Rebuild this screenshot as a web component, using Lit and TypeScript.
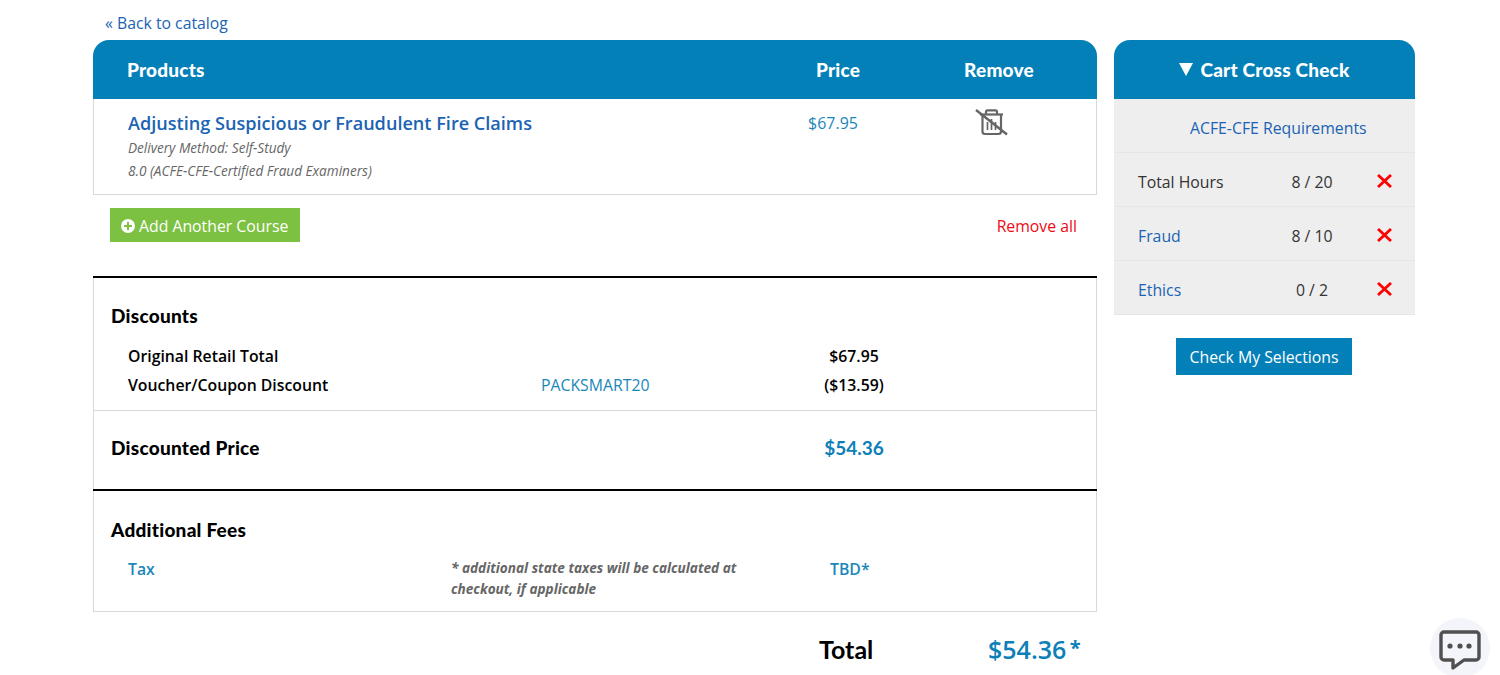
import { LitElement, html, css } from "lit";
import { customElement } from "lit/decorators.js";

const trashIcon = html`<svg class="trash" width="33" height="27" viewBox="0 0 33 27" fill="none" stroke="#666" stroke-width="2.200">
  <path d="M5 5.500H28" />
  <path d="M11 5.500V2.800C11 1.900 11.600 1.300 12.500 1.300H20.500C21.400 1.300 22 1.900 22 2.800V5.500" />
  <path d="M7.500 5.500V22.500C7.500 24 8.500 25 10 25H23.500C25 25 26 24 26 22.500V5.500" />
  <path d="M12.500 13V21M16.500 10V21M20.500 13V21" stroke-width="1.700" />
  <path d="M1 1L32 25.500" stroke-width="2.400" />
</svg>`;

const crossIcon = html`<svg class="cross" width="15" height="14" viewBox="0 0 15 14" fill="none" stroke="#f00" stroke-width="2.800">
  <path d="M1 1L14 13M14 1L1 13" />
</svg>`;

const chatIcon = html`<svg class="chat-icon" width="42" height="41" viewBox="0 0 42 41" fill="none">
  <path d="M5 2H37C38.700 2 40 3.300 40 5V27C40 28.700 38.700 30 37 30H25L14 38V30H5C3.300 30 2 28.700 2 27V5C2 3.300 3.300 2 5 2Z" stroke="#505050" stroke-width="3.400" stroke-linejoin="round" />
  <circle cx="11" cy="16" r="2.600" fill="#505050" />
  <circle cx="21" cy="16" r="2.600" fill="#505050" />
  <circle cx="30" cy="16" r="2.600" fill="#505050" />
</svg>`;

const requirements = [
  { label: "Total Hours", value: "8 / 20", link: false },
  { label: "Fraud", value: "8 / 10", link: true },
  { label: "Ethics", value: "0 / 2", link: true },
];

@customElement("app-root")
export class AppRoot extends LitElement {
  static styles = css`
    :host {
      display: block;
      height: 675px;
      overflow: hidden;
      background: #fff;
      font-family: "Open Sans", sans-serif;
      font-size: 15.800px;
      color: #333;
    }

    a {
      color: #1b63b3;
      text-decoration: none;
    }

    .page {
      display: grid;
      grid-template-columns: 1004px 301px;
      column-gap: 17px;
      padding: 40px 0 0 93px;
      align-items: start;
    }

    .back {
      position: absolute;
      top: 13px;
      left: 105px;
      line-height: 20px;
    }

    .head {
      height: 59px;
      background: #0480b9;
      border-radius: 16px 16px 0 0;
      color: #fff;
      font-family: Lato, sans-serif;
      font-weight: 900;
      font-size: 19px;
      letter-spacing: 0.200px;
    }

    .cart-head {
      display: grid;
      grid-template-columns: 651px 120px 1fr;
      align-items: center;
      padding-left: 34px;
    }

    .cart-head span:nth-child(2),
    .cart-head span:nth-child(3) {
      text-align: center;
    }

    .cart-head span:nth-child(3) {
      padding-left: 3px;
    }

    .product {
      display: grid;
      grid-template-columns: 680px 167px 1fr;
      height: 96px;
      box-sizing: border-box;
      padding: 12px 0 0 34px;
      border: 1px solid #d9d9d9;
      border-top: none;
    }

    .title {
      display: block;
      font-size: 18.100px;
      font-weight: 600;
      line-height: 25px;
    }

    .meta {
      font-size: 13.600px;
      font-style: italic;
      color: #666;
      line-height: 23px;
    }

    .price {
      color: #1a87b9;
      font-size: 16px;
      line-height: 24px;
    }

    .trash {
      display: block;
      margin-top: -2px;
    }

    .actions {
      display: flex;
      justify-content: space-between;
      align-items: center;
      margin-top: 13px;
      padding: 0 20px 0 17px;
    }

    .add {
      display: flex;
      align-items: center;
      gap: 4px;
      box-sizing: border-box;
      width: 190px;
      height: 34px;
      padding: 1px 0 0 11px;
      background: #7dc142;
      color: #fff;
    }

    .plus {
      position: relative;
      width: 14px;
      height: 14px;
      border-radius: 50%;
      background: #fff;
    }

    .plus::before,
    .plus::after {
      content: "";
      position: absolute;
      background: #7dc142;
    }

    .plus::before {
      left: 3px;
      right: 3px;
      top: 6px;
      height: 2px;
    }

    .plus::after {
      top: 3px;
      bottom: 3px;
      left: 6px;
      width: 2px;
    }

    .remove-all {
      color: #f00a14;
      padding-top: 1px;
    }

    .summary {
      margin-top: 34px;
      border: 1px solid #d9d9d9;
      border-top: none;
      border-bottom: none;
    }

    .block {
      border-top: 2px solid #000;
      margin: 0 -1px;
      padding: 0 1px;
    }

    .heading {
      font-family: Lato, sans-serif;
      font-weight: 900;
      font-size: 19px;
      letter-spacing: 0.250px;
      color: #000;
      padding-left: 17px;
    }

    .discounts {
      height: 135px;
      box-sizing: border-box;
      padding-top: 26px;
      border-bottom: 1px solid #d9d9d9;
    }

    .discounts .heading {
      line-height: 24px;
      margin-bottom: 14px;
    }

    .line {
      display: grid;
      grid-template-columns: 413px 248px 130px;
      padding-left: 34px;
      font-weight: 600;
      color: #000;
      line-height: 29px;
    }

    .code {
      color: #1a87b9;
      font-weight: 400;
    }

    .amount {
      text-align: center;
    }

    .discounted {
      display: grid;
      grid-template-columns: 695px 130px;
      align-items: center;
      height: 78px;
      box-sizing: border-box;
      padding-bottom: 6px;
    }

    .discounted .amount {
      color: #0d80b8;
      font-family: Lato, sans-serif;
      font-weight: 700;
      font-size: 19px;
    }

    .fees {
      height: 123px;
      box-sizing: border-box;
      padding-top: 27px;
      border-bottom: 1px solid #d9d9d9;
    }

    .fees .heading {
      line-height: 24px;
      margin-bottom: 17px;
    }

    .tax {
      display: grid;
      grid-template-columns: 323px 379px 100px;
      padding-left: 34px;
      color: #1a87b9;
      font-weight: 600;
      line-height: 20px;
    }

    .note {
      font-size: 13.600px;
      font-style: italic;
      font-weight: 700;
      color: #666;
      line-height: 21px;
      margin-top: -2px;
    }

    .total {
      display: flex;
      align-items: center;
      height: 40px;
      margin-top: 17px;
      padding-left: 726px;
    }

    .total-label {
      width: 169px;
      font-family: Lato, sans-serif;
      font-weight: 700;
      font-size: 25px;
      color: #000;
    }

    .total-value {
      font-weight: 600;
      font-size: 25px;
      line-height: 34px;
      color: #0d80b8;
      white-space: nowrap;
    }

    .total-value span {
      margin-left: -3px;
      font-size: 20px;
      font-weight: 700;
      vertical-align: 4px;
      line-height: 1;
    }

    .side-head {
      display: flex;
      justify-content: center;
      align-items: center;
      gap: 7px;
    }

    .req-title {
      height: 53px;
      line-height: 58px;
      padding-left: 76px;
      background: #eee;
    }

    .req-rows {
      border-bottom: 1px solid #e6e6e6;
    }

    .req-row {
      display: grid;
      grid-template-columns: 134px 80px 1fr;
      align-items: center;
      height: 54px;
      box-sizing: border-box;
      padding: 5px 0 0 24px;
      background: #eee;
      border-top: 1px solid #e6e6e6;
      color: #333;
    }

    .req-row span:nth-child(2) {
      text-align: center;
    }

    .cross {
      display: block;
      margin: -3px 0 0 25px;
    }

    .check-wrap {
      display: flex;
      justify-content: center;
      margin-top: 23px;
      padding-right: 1px;
    }

    .check {
      width: 176px;
      height: 37px;
      line-height: 38px;
      text-align: center;
      background: #0480b9;
      color: #fff;
    }

    .chat {
      position: fixed;
      left: 1430px;
      top: 618px;
      width: 60px;
      height: 60px;
      display: flex;
      align-items: center;
      justify-content: center;
      border-radius: 50%;
      background: #f4f5fa;
    }

    .chat-icon {
      display: block;
      margin-top: 5px;
    }
  `;

  render() {
    return html`
      <a class="back" href="#">« Back to catalog</a>
      <div class="page">
        <main>
          <div class="head cart-head">
            <span>Products</span>
            <span>Price</span>
            <span>Remove</span>
          </div>
          <div class="product">
            <div>
              <a class="title" href="#">Adjusting Suspicious or Fraudulent Fire Claims</a>
              <div class="meta">Delivery Method: Self-Study</div>
              <div class="meta">8.0 (ACFE-CFE-Certified Fraud Examiners)</div>
            </div>
            <div class="price">$67.95</div>
            <div>${trashIcon}</div>
          </div>
          <div class="actions">
            <a class="add" href="#"><span class="plus"></span>Add Another Course</a>
            <a class="remove-all" href="#">Remove all</a>
          </div>
          <div class="summary">
            <section class="block discounts">
              <div class="heading">Discounts</div>
              <div class="line">
                <span>Original Retail Total</span>
                <span></span>
                <span class="amount">$67.95</span>
              </div>
              <div class="line">
                <span>Voucher/Coupon Discount</span>
                <span class="code">PACKSMART20</span>
                <span class="amount">($13.59)</span>
              </div>
            </section>
            <section class="discounted">
              <div class="heading">Discounted Price</div>
              <div class="amount">$54.36</div>
            </section>
            <section class="block fees">
              <div class="heading">Additional Fees</div>
              <div class="tax">
                <span>Tax</span>
                <span class="note">* additional state taxes will be calculated at<br />checkout, if applicable</span>
                <span>TBD*</span>
              </div>
            </section>
          </div>
          <div class="total">
            <span class="total-label">Total</span>
            <span class="total-value">$54.36 <span>*</span></span>
          </div>
        </main>
        <aside>
          <div class="head side-head">
            <svg width="14" height="13" viewBox="0 0 14 13"><path d="M0 0H14L7 13Z" fill="#fff" /></svg>
            <span>Cart Cross Check</span>
          </div>
          <div class="req-title"><a href="#">ACFE-CFE Requirements</a></div>
          <div class="req-rows">
            ${requirements.map(
              (r) => html`
                <div class="req-row">
                  ${r.link ? html`<a href="#">${r.label}</a>` : html`<span>${r.label}</span>`}
                  <span>${r.value}</span>
                  ${crossIcon}
                </div>
              `
            )}
          </div>
          <div class="check-wrap"><a class="check" href="#">Check My Selections</a></div>
        </aside>
      </div>
      <div class="chat">${chatIcon}</div>
    `;
  }
}

declare global {
  interface HTMLElementTagNameMap {
    "app-root": AppRoot;
  }
}
